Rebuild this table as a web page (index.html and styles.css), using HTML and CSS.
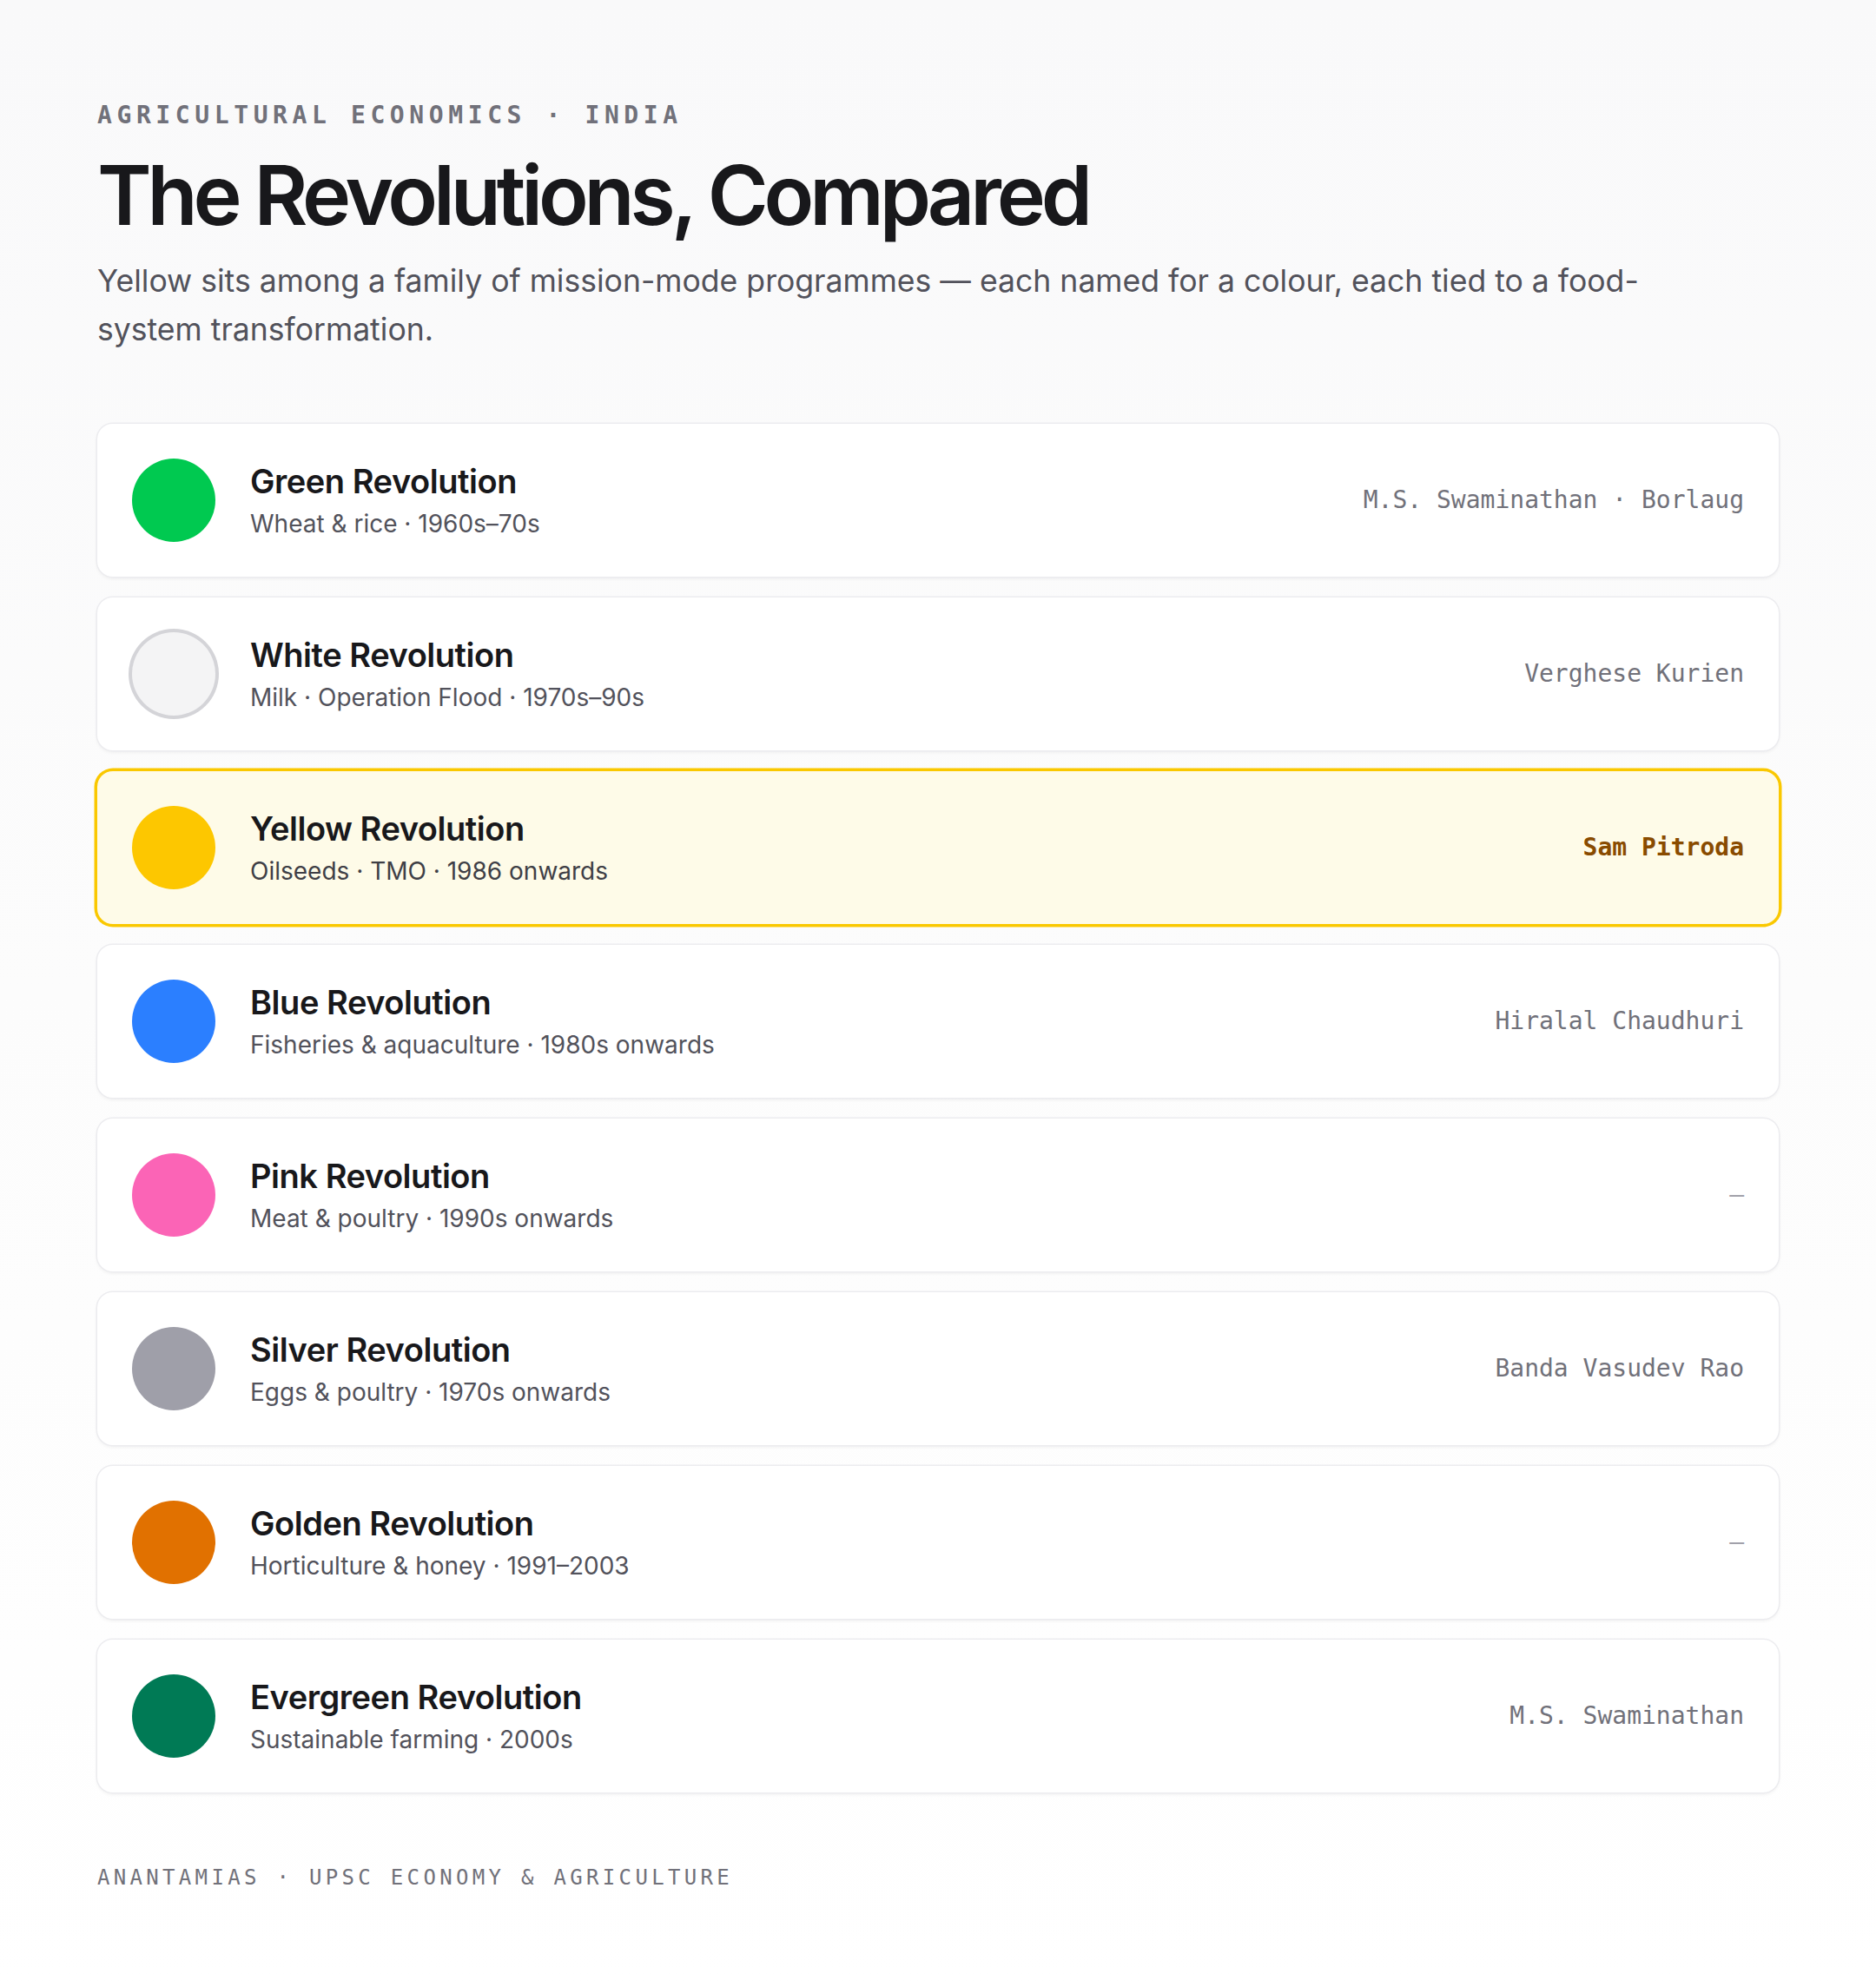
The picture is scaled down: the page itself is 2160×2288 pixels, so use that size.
FILE: index.html
```html
<!DOCTYPE html>
<html lang="en">
<head>
<meta charset="utf-8">
<title>The Revolutions, Compared</title>
<link rel="stylesheet" href="styles.css">
</head>
<body>
<main class="page">
  <header class="intro">
    <p class="eyebrow">AGRICULTURAL ECONOMICS · INDIA</p>
    <h1 class="title">The Revolutions, Compared</h1>
    <p class="lede">Yellow sits among a family of mission-mode programmes — each named for a colour, each tied to a food-system transformation.</p>
  </header>

  <ul class="list">
    <li class="card">
      <span class="dot dot-green"></span>
      <div class="info">
        <h2 class="name">Green Revolution</h2>
        <p class="meta">Wheat &amp; rice · 1960s–70s</p>
      </div>
      <span class="people">M.S. Swaminathan · Borlaug</span>
    </li>
    <li class="card">
      <span class="dot dot-white"></span>
      <div class="info">
        <h2 class="name">White Revolution</h2>
        <p class="meta">Milk · Operation Flood · 1970s–90s</p>
      </div>
      <span class="people">Verghese Kurien</span>
    </li>
    <li class="card card-active">
      <span class="dot dot-yellow"></span>
      <div class="info">
        <h2 class="name">Yellow Revolution</h2>
        <p class="meta">Oilseeds · TMO · 1986 onwards</p>
      </div>
      <span class="people">Sam Pitroda</span>
    </li>
    <li class="card">
      <span class="dot dot-blue"></span>
      <div class="info">
        <h2 class="name">Blue Revolution</h2>
        <p class="meta">Fisheries &amp; aquaculture · 1980s onwards</p>
      </div>
      <span class="people">Hiralal Chaudhuri</span>
    </li>
    <li class="card">
      <span class="dot dot-pink"></span>
      <div class="info">
        <h2 class="name">Pink Revolution</h2>
        <p class="meta">Meat &amp; poultry · 1990s onwards</p>
      </div>
      <span class="people people-none">–</span>
    </li>
    <li class="card">
      <span class="dot dot-silver"></span>
      <div class="info">
        <h2 class="name">Silver Revolution</h2>
        <p class="meta">Eggs &amp; poultry · 1970s onwards</p>
      </div>
      <span class="people">Banda Vasudev Rao</span>
    </li>
    <li class="card">
      <span class="dot dot-golden"></span>
      <div class="info">
        <h2 class="name">Golden Revolution</h2>
        <p class="meta">Horticulture &amp; honey · 1991–2003</p>
      </div>
      <span class="people people-none">–</span>
    </li>
    <li class="card">
      <span class="dot dot-evergreen"></span>
      <div class="info">
        <h2 class="name">Evergreen Revolution</h2>
        <p class="meta">Sustainable farming · 2000s</p>
      </div>
      <span class="people">M.S. Swaminathan</span>
    </li>
  </ul>

  <footer class="footer">ANANTAMIAS · UPSC ECONOMY &amp; AGRICULTURE</footer>
</main>
</body>
</html>
```

FILE: styles.css
```css
* { box-sizing: border-box; }

html, body {
  margin: 0;
  padding: 0;
}

body {
  min-height: 2288px;
  background: linear-gradient(180deg, #f9f9fa 0%, #fcfcfc 50%, #ffffff 100%);
  font-family: Inter, "Noto Sans", "Liberation Sans", sans-serif;
  color: #18181b;
}

.page {
  padding: 113px 112px 108px;
}

.intro {
  display: flex;
  flex-direction: column;
}

.eyebrow {
  margin: 0;
  font-family: "DejaVu Sans Mono", "Liberation Mono", monospace;
  font-weight: 700;
  font-size: 28px;
  line-height: 1.4;
  letter-spacing: 0.2em;
  color: #71717a;
}

.title {
  margin: 23px 0 0;
  font-size: 95px;
  line-height: 1.06;
  font-weight: 600;
  letter-spacing: -0.054em;
  color: #18181b;
}

.lede {
  margin: 20px 0 0;
  max-width: 1860px;
  font-size: 35.6px;
  line-height: 56px;
  color: #52525b;
}

.list {
  list-style: none;
  margin: 80px 0 0;
  padding: 0;
  display: flex;
  flex-direction: column;
  gap: 24px;
}

.card {
  display: flex;
  align-items: center;
  gap: 40px;
  padding: 40px;
  background: #ffffff;
  border-radius: 18px;
  box-shadow: 0 0 0 1.5px #ececef, 0 2px 4px rgba(24, 24, 27, 0.07);
}

.card-active {
  background: #fefbe8;
  box-shadow: 0 0 0 3.5px #fac800;
}

.dot {
  flex: none;
  width: 96px;
  height: 96px;
  border-radius: 50%;
}

.dot-green { background: #00c950; }
.dot-white { background: #f4f4f5; box-shadow: 0 0 0 4px #d4d4d8; }
.dot-yellow { background: #fdc700; }
.dot-blue { background: #2b7fff; }
.dot-pink { background: #fb64b6; }
.dot-silver { background: #9f9fa9; }
.dot-golden { background: #e17100; }
.dot-evergreen { background: #007a55; }

.info {
  flex: 1;
  display: flex;
  flex-direction: column;
  gap: 5px;
}

.name {
  margin: 0;
  font-size: 38px;
  line-height: 1.3;
  font-weight: 600;
  letter-spacing: -0.012em;
  color: #18181b;
}

.meta {
  margin: 0;
  font-size: 28px;
  line-height: 1.3;
  color: #52525b;
}

.card-active .meta {
  color: #3f3f46;
}

.people {
  flex: none;
  font-family: "DejaVu Sans Mono", "Liberation Mono", monospace;
  font-size: 28px;
  color: #71717a;
}

.card-active .people {
  font-weight: 700;
  color: #894b00;
}

.people-none {
  color: #a1a1aa;
}

.footer {
  margin-top: 80px;
  font-family: "DejaVu Sans Mono", "Liberation Mono", monospace;
  font-size: 24px;
  line-height: 1.5;
  letter-spacing: 0.18em;
  color: #71717a;
}
```
